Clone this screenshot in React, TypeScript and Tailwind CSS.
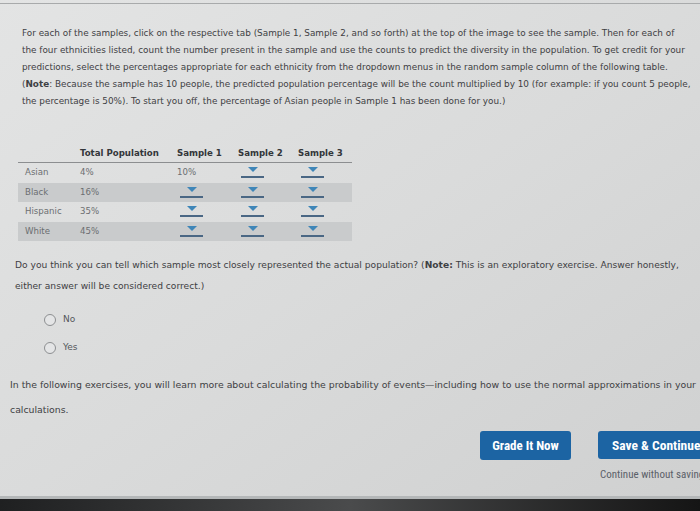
const rows = [
  { name: "Asian", total: "4%", s1: "10%", shade: false },
  { name: "Black", total: "16%", s1: null, shade: true },
  { name: "Hispanic", total: "35%", s1: null, shade: false },
  { name: "White", total: "45%", s1: null, shade: true },
]

function Dropdown() {
  return (
    <div className="ml-[8px] flex w-[23px] flex-col items-center">
      <svg width="10" height="5" viewBox="0 0 10 5">
        <polygon points="0,0 10,0 5,5" fill="#3f86b8" />
      </svg>
      <div className="mt-[4px] h-[2px] w-full bg-[#4a6784]" />
    </div>
  )
}

function Radio({ label }: { label: string }) {
  return (
    <div className="flex h-[20px] items-center pl-[44px]">
      <span className="h-[12px] w-[12px] rounded-full border border-[#8d8f91] bg-[#e4e5e6]" />
      <span className="ml-[7px] text-[9px] text-[#55585b]">{label}</span>
    </div>
  )
}

export default function App() {
  return (
    <div className="flex h-[511px] w-[700px] flex-col overflow-hidden bg-linear-to-br from-[#e3e4e4] via-[#dadbdb] to-[#cfd0d0] font-['DejaVu_Sans',sans-serif] text-[#3e4043]">
      <div className="mt-[3px] h-px bg-[#a8aaab]" />

      <div className="mt-[21px] whitespace-nowrap pl-[22px] text-[8.86px] leading-[17px]">
        <div>
          For each of the samples, click on the respective tab (Sample 1, Sample 2, and so forth) at the top of the image to
          see the sample. Then for each of
        </div>
        <div>
          the four ethnicities listed, count the number present in the sample and use the counts to predict the diversity in
          the population. To get credit for your
        </div>
        <div>
          predictions, select the percentages appropriate for each ethnicity from the dropdown menus in the random sample
          column of the following table.
        </div>
        <div>
          (<span className="font-bold">Note</span>: Because the sample has 10 people, the predicted population percentage
          will be the count multiplied by 10 (for example: if you count 5 people,
        </div>
        <div>
          the percentage is 50%). To start you off, the percentage of Asian people in Sample 1 has been done for you.)
        </div>
      </div>

      <div className="ml-[18px] mt-[35px] w-[334px] text-[8.6px]">
        <div className="grid h-[18px] grid-cols-[60px_94px_61px_60px_59px] items-center border-b border-[#8c8e90] font-bold text-[#33363a]">
          <span />
          <span className="pl-[2px]">Total Population</span>
          <span className="pl-[5px]">Sample 1</span>
          <span className="pl-[5px]">Sample 2</span>
          <span className="pl-[5px]">Sample 3</span>
        </div>
        {rows.map((r) => (
          <div
            key={r.name}
            className={`grid h-[19.5px] grid-cols-[60px_94px_61px_60px_59px] items-center text-[#6b6e71] ${
              r.shade ? "bg-[#c9cbcc]" : ""
            }`}
          >
            <span className="pl-[7px]">{r.name}</span>
            <span className="pl-[2px]">{r.total}</span>
            {r.s1 ? <span className="pl-[5px]">{r.s1}</span> : <Dropdown />}
            <Dropdown />
            <Dropdown />
          </div>
        ))}
      </div>

      <div className="mt-[14px] whitespace-nowrap pl-[15px] text-[9.15px] leading-[21px]">
        <div>
          Do you think you can tell which sample most closely represented the actual population? (
          <span className="font-bold">Note:</span> This is an exploratory exercise. Answer honestly,
        </div>
        <div>either answer will be considered correct.)</div>
      </div>

      <div className="mt-[13px] flex flex-col gap-[8px]">
        <Radio label="No" />
        <Radio label="Yes" />
      </div>

      <div className="mt-[14px] whitespace-nowrap pl-[10px] text-[9.35px] leading-[25px]">
        <div>
          In the following exercises, you will learn more about calculating the probability of events—including how to use
          the normal approximations in your
        </div>
        <div>calculations.</div>
      </div>

      <div className="mt-[9px] flex items-start pl-[480px] font-['Liberation_Sans_Narrow','Roboto_Condensed',Roboto,sans-serif]">
        <button className="h-[29px] w-[91px] shrink-0 rounded-[3px] bg-[#1c64a3] text-[13px] font-bold text-white">
          Grade It Now
        </button>
        <div className="ml-[27px] flex shrink-0 flex-col">
          <button className="h-[28px] w-[125px] rounded-[3px] bg-[#1c64a3] pl-[14px] text-left text-[13.5px] font-bold whitespace-nowrap text-white">
            Save &amp; Continue
          </button>
          <span className="mt-[8px] whitespace-nowrap pl-[2px] text-[11px] text-[#5b6068]">Continue without saving</span>
        </div>
      </div>

      <div className="mt-auto h-[3px] bg-[#b4b7b8]" />
      <div className="h-[12px] bg-linear-to-r from-[#1f2021] via-[#4a4b4c] to-[#151515]" />
    </div>
  )
}
